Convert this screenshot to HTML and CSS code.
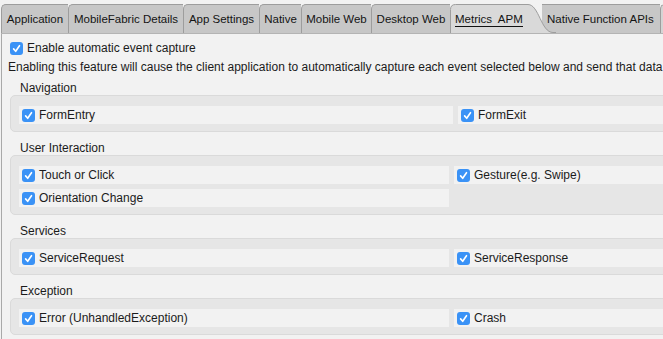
FILE: index.html
```html
<!DOCTYPE html>
<html>
<head>
<meta charset="utf-8">
<link rel="stylesheet" href="styles.css">
</head>
<body>
<div class="window">
  <div class="tabs">
    <div class="tab">Application</div>
    <div class="tab">MobileFabric Details</div>
    <div class="tab">App Settings</div>
    <div class="tab">Native</div>
    <div class="tab">Mobile Web</div>
    <div class="tab">Desktop Web</div>
    <div class="tab active">
      <svg class="active-shape" viewBox="0 0 106 29" width="106" height="29">
        <path d="M0.5,29 L0.5,5.5 Q0.5,0.5 5.5,0.5 L78,0.5 C89,0.5 91,28.5 103,28.5 L106,28.5 L106,29 Z" fill="#d9d9d9"/>
        <path d="M0.5,29 L0.5,5.5 Q0.5,0.5 5.5,0.5 L78,0.5 C89,0.5 91,28.5 103,28.5 L106,28.5" fill="none" stroke="#9d9d9d" stroke-width="1"/>
      </svg>
      <span class="active-label">Metrics  APM</span>
    </div>
    <div class="tab after-active">Native Function APIs</div>
    <div class="tab filler"></div>
  </div>
  <div class="panel">
    <div class="check enable">
      <svg class="cb" viewBox="0 0 13 13"><rect width="13" height="13" rx="3" fill="#3a92f6"/><path d="M3.6 6.9 L5.7 9.3 L9.5 3.7" fill="none" stroke="#fff" stroke-width="1.6" stroke-linecap="round" stroke-linejoin="round"/></svg>
      <span>Enable automatic event capture</span>
    </div>
    <p class="desc">Enabling this feature will cause the client application to automatically capture each event selected below and send that data to the server.</p>

    <section class="sec">
      <h3 class="sec-title">Navigation</h3>
      <div class="group nav">
        <div class="item"><svg class="cb" viewBox="0 0 13 13"><rect width="13" height="13" rx="3" fill="#3a92f6"/><path d="M3.6 6.9 L5.7 9.3 L9.5 3.7" fill="none" stroke="#fff" stroke-width="1.6" stroke-linecap="round" stroke-linejoin="round"/></svg><span>FormEntry</span></div>
        <div class="item"><svg class="cb" viewBox="0 0 13 13"><rect width="13" height="13" rx="3" fill="#3a92f6"/><path d="M3.6 6.9 L5.7 9.3 L9.5 3.7" fill="none" stroke="#fff" stroke-width="1.6" stroke-linecap="round" stroke-linejoin="round"/></svg><span>FormExit</span></div>
      </div>
    </section>

    <section class="sec">
      <h3 class="sec-title">User Interaction</h3>
      <div class="group">
        <div class="item"><svg class="cb" viewBox="0 0 13 13"><rect width="13" height="13" rx="3" fill="#3a92f6"/><path d="M3.6 6.9 L5.7 9.3 L9.5 3.7" fill="none" stroke="#fff" stroke-width="1.6" stroke-linecap="round" stroke-linejoin="round"/></svg><span>Touch or Click</span></div>
        <div class="item"><svg class="cb" viewBox="0 0 13 13"><rect width="13" height="13" rx="3" fill="#3a92f6"/><path d="M3.6 6.9 L5.7 9.3 L9.5 3.7" fill="none" stroke="#fff" stroke-width="1.6" stroke-linecap="round" stroke-linejoin="round"/></svg><span>Gesture(e.g. Swipe)</span></div>
        <div class="item"><svg class="cb" viewBox="0 0 13 13"><rect width="13" height="13" rx="3" fill="#3a92f6"/><path d="M3.6 6.9 L5.7 9.3 L9.5 3.7" fill="none" stroke="#fff" stroke-width="1.6" stroke-linecap="round" stroke-linejoin="round"/></svg><span>Orientation Change</span></div>
      </div>
    </section>

    <section class="sec">
      <h3 class="sec-title">Services</h3>
      <div class="group">
        <div class="item"><svg class="cb" viewBox="0 0 13 13"><rect width="13" height="13" rx="3" fill="#3a92f6"/><path d="M3.6 6.9 L5.7 9.3 L9.5 3.7" fill="none" stroke="#fff" stroke-width="1.6" stroke-linecap="round" stroke-linejoin="round"/></svg><span>ServiceRequest</span></div>
        <div class="item"><svg class="cb" viewBox="0 0 13 13"><rect width="13" height="13" rx="3" fill="#3a92f6"/><path d="M3.6 6.9 L5.7 9.3 L9.5 3.7" fill="none" stroke="#fff" stroke-width="1.6" stroke-linecap="round" stroke-linejoin="round"/></svg><span>ServiceResponse</span></div>
      </div>
    </section>

    <section class="sec">
      <h3 class="sec-title">Exception</h3>
      <div class="group">
        <div class="item"><svg class="cb" viewBox="0 0 13 13"><rect width="13" height="13" rx="3" fill="#3a92f6"/><path d="M3.6 6.9 L5.7 9.3 L9.5 3.7" fill="none" stroke="#fff" stroke-width="1.6" stroke-linecap="round" stroke-linejoin="round"/></svg><span>Error (UnhandledException)</span></div>
        <div class="item"><svg class="cb" viewBox="0 0 13 13"><rect width="13" height="13" rx="3" fill="#3a92f6"/><path d="M3.6 6.9 L5.7 9.3 L9.5 3.7" fill="none" stroke="#fff" stroke-width="1.6" stroke-linecap="round" stroke-linejoin="round"/></svg><span>Crash</span></div>
      </div>
    </section>
  </div>
</div>
</body>
</html>
```
FILE: styles.css
```css
html, body {
  margin: 0;
  padding: 0;
  background: #f2f2f2;
  overflow: hidden;
}
body {
  font-family: "Liberation Sans", Arial, sans-serif;
  font-size: 12px;
  color: #1b1b1b;
  width: 663px;
  height: 339px;
}
.window {
  margin: 4px 0 0 1px;
  width: 1000px;
}
.tabs {
  display: grid;
  grid-template-columns: 67px 115px 76px 42px 70px 79px 92px 118px 200px;
  border-bottom: 1px solid #b4b4b4;
}
.tab {
  position: relative;
  box-sizing: border-box;
  height: 29px;
  background: #c7c7c7;
  border-top: 1px solid #9d9d9d;
  border-left: 1px solid #9d9d9d;
  border-top-left-radius: 5px;
  font-size: 11.5px;
  color: #141414;
  display: flex;
  align-items: center;
  justify-content: center;
  white-space: nowrap;
  overflow: visible;
}
.tab.active {
  background: transparent;
  border: none;
  justify-content: flex-start;
  padding-left: 5px;
  z-index: 2;
}
.active-shape {
  position: absolute;
  left: 0;
  top: 0;
}
.active-label {
  position: relative;
  white-space: pre;
  border-bottom: 1px solid #111;
  line-height: 13px;
  margin-top: 2px;
}
.tab.after-active {
  border-left: none;
  border-top-left-radius: 0;
  justify-content: flex-start;
  padding-left: 5px;
}
.tab.filler {
  background: #d4d4d4;
}
.panel {
  border-left: 1px solid #a9a9a9;
  padding-top: 7px;
  padding-bottom: 20px;
}
.check {
  display: flex;
  align-items: center;
  gap: 4px;
  height: 14px;
  line-height: 14px;
}
.enable {
  margin-left: 8px;
}
.cb {
  width: 13px;
  height: 13px;
  flex: none;
  display: block;
}
.desc {
  margin: 5px 0 0 6px;
  line-height: 14px;
  white-space: nowrap;
}
.sec {
  margin-top: 9px;
}
.sec:first-of-type {
  margin-top: 7px;
}
.sec-title {
  margin: 0 0 0 18px;
  font-size: 12px;
  font-weight: normal;
  line-height: 14px;
}
.group {
  margin-left: 8px;
  width: 900px;
  box-sizing: border-box;
  background: #e6e6e6;
  border: 1px solid #dadada;
  border-radius: 5px;
  padding: 10px 8px 7px 8px;
  display: grid;
  grid-template-columns: 430px 1fr;
  column-gap: 5px;
  row-gap: 5px;
}
.group.nav {
  grid-template-columns: 434px 1fr;
}
.item {
  display: flex;
  align-items: center;
  gap: 4px;
  height: 18px;
  padding-left: 3px;
  background: #f2f2f2;
}
```
